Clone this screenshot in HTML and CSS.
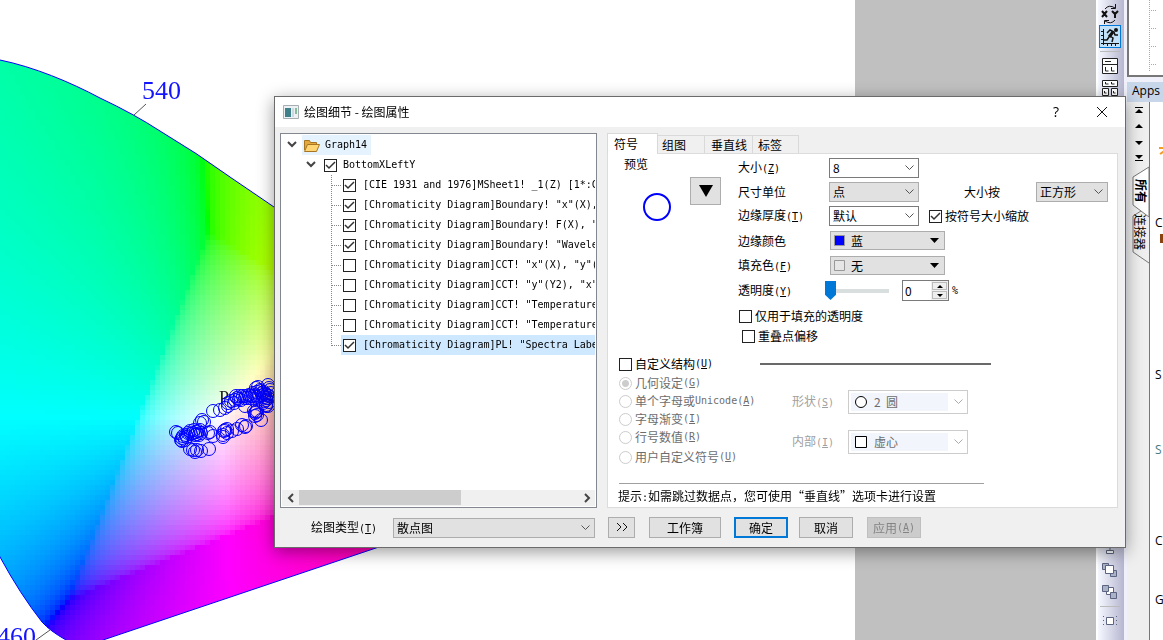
FILE: index.html
```html
<!DOCTYPE html>
<html lang="zh-CN">
<head>
    <meta charset="UTF-8">
    <meta name="viewport" content="width=device-width, initial-scale=1.0">
    <title>绘图细节 - 绘图属性</title>
    <link rel="stylesheet" href="styles.css">
</head>
<body>
    <div class="app">
        <main class="workspace">
            <div class="graph-page">
                <canvas id="diagram" class="diagram" width="855" height="640"></canvas>
                <svg class="diagram-labels" width="855" height="640">
                    <path id="locus" d="M-40 54 Q-10 57 0 60 C34 67 70 82 100 98 Q134 114 160 131 Q197 153 230 177 L274 207 L640 459 L103 640 L90 650 Q76 648 66 640 Q50 631 42 622 Q20 594 0 557 L-40 480 Z" fill="none" stroke="#00f"/>
                    <path d="M134 115 L146 104 M50 630 L36 640" stroke="#555"/>
                    <text x="142" y="99" class="wavelength">540</text>
                    <text x="-3" y="645" class="wavelength">460</text>
                </svg>
            </div>
        </main>

        <nav class="toolbar">
            <button class="tool" aria-label="XY">
                <svg width="20" height="20" viewBox="0 0 20 20" fill="none" stroke="#111">
                    <path d="M2 7l5 6M7 7l-5 6M12 7l3 3 3-3M15 10v4" stroke-width="2"/>
                    <path d="M5 5q4-5 10-1M15.500 0v4.500H11M15 16q-4 5-10 1M4.500 21v-4.500H9"/>
                </svg>
            </button>
            <button class="tool active" aria-label="Run">
                <svg width="20" height="20" viewBox="0 0 20 20" fill="none" stroke="#111">
                    <path d="M3.500 2v16M1 16.500h18M1 4.500h2M1 8.500h2M1 12.500h2M7.500 16v3M11.500 16v3M15.500 16v3"/>
                    <path d="M13 5l-4 5" stroke-width="3"/>
                    <path d="M7 6l3-3 4 2 1 3h3M10 9l3 2-1 4M9 10l-2 3H4" stroke-width="1.500"/>
                    <circle cx="16" cy="3" r="2" fill="#111" stroke="none"/>
                </svg>
            </button>
            <hr>
            <button class="tool" aria-label="Layout">
                <svg width="18" height="18" viewBox="0 0 18 18" fill="#fff" stroke="#222">
                    <path d="M1.500 1.500h15v15h-15zM1.500 7.500h15"/>
                    <path d="M4 4.500h6M4.500 10v4h3M10.500 10v4h3" fill="none"/>
                </svg>
            </button>
            <button class="tool" aria-label="Grid layout">
                <svg width="18" height="18" viewBox="0 0 18 18" fill="#fff" stroke="#222">
                    <path d="M1.500 1.500h15v6h-15zM1.500 9.500h6v7h-6zM10.500 9.500h6v7h-6z"/>
                    <path d="M4.500 3v2h3M10.500 3v2h3M3.500 12v2h2M12.500 12v2h2" fill="none"/>
                </svg>
            </button>
            <div class="spacer"></div>
            <button class="tool" aria-label="Align">
                <svg width="18" height="18" viewBox="0 0 18 18" fill="#fff" stroke="#5b6480">
                    <path d="M3.500 1.500h11v4h-11zM9 6v5M5.500 11.500h7v3h-7z"/>
                </svg>
            </button>
            <button class="tool" aria-label="Bring to front">
                <svg width="18" height="18" viewBox="0 0 18 18" fill="#a9b2c6" stroke="#5b6480">
                    <path d="M1.500 2.500h6v6h-6zM9.500 9.500h6v6h-6z"/>
                    <path d="M4.500 4.500h8v8h-8z" fill="#fff"/>
                </svg>
            </button>
            <button class="tool" aria-label="Send to back">
                <svg width="18" height="18" viewBox="0 0 18 18" fill="#a9b2c6" stroke="#5b6480">
                    <path d="M5.500 4.500h7v7h-7z" fill="#fff"/>
                    <path d="M1.500 2.500h6v6h-6zM9.500 9.500h6v6h-6z"/>
                </svg>
            </button>
            <hr>
            <button class="tool" aria-label="Group">
                <svg width="18" height="18" viewBox="0 0 18 18" fill="#fff" stroke="#5b6480">
                    <path d="M5.500 5.500h7v7h-7z"/>
                    <path d="M2.500 4v12M15.500 4v12" stroke-dasharray="1 3"/>
                </svg>
            </button>
        </nav>

        <aside class="side">
            <div class="side-tree">
                <svg width="14" height="72" fill="none" stroke="#aaa" stroke-dasharray="1 1">
                    <path d="M.5 0v72M0 10.500h8M0 28.500h8M0 46.500h8M0 64.500h8"/>
                </svg>
            </div>
            <div class="side-title">Apps</div>
            <div class="side-body">
                <svg class="side-tabs" width="22" height="170" fill="none" stroke="#777">
                    <g fill="#000" stroke="none">
                        <path d="M8 5h8v1H8zM8 11l4-4 4 4zM8 26l4-4 4 4zM8 39l4 4 4-4zM8 53l4 4 4-4zM8 58h8v1H8z"/>
                    </g>
                    <path d="M22 65L6 75v28l16 12V65" fill="#fff"/>
                    <path d="M14 109l-8 5v36l16 11"/>
                    <text class="side-tab current" transform="translate(9 77) rotate(90)">所有</text>
                    <text class="side-tab" transform="translate(8 112) rotate(90)">连接器</text>
                </svg>
                <ul class="app-list">
                    <li class="first">
                        <svg width="12" height="12" fill="none" stroke="#f59a23" stroke-width="2"><path d="M4 3h8M5 9l6-4"/></svg>
                        C
                        <svg width="12" height="9" fill="#8a4413"><path d="M5 0h3v9H5z"/></svg>
                    </li>
                    <li></li>
                    <li>S</li>
                    <li class="teal">S</li>
                    <li class="low">C</li>
                    <li>G</li>
                </ul>
            </div>
        </aside>
    </div>

    <section class="dialog" role="dialog" aria-labelledby="dialog-title">
        <header class="titlebar">
            <svg width="16" height="14" viewBox="0 0 16 14">
                <path d="M.5.5h15v13H.5z" fill="#eef1f3" stroke="#a6adb3"/>
                <path d="M2 3h6v9H2z" fill="#3d8089"/>
                <path d="M9 3h2v9H9z" fill="#ccd8e2"/>
                <path d="M12 3h2v6h-2z" fill="#86bd9b"/>
            </svg>
            <h1 id="dialog-title">绘图细节 - 绘图属性</h1>
            <button class="title-button help">?</button>
            <button class="title-button" aria-label="关闭">
                <svg width="12" height="12" stroke="#111"><path d="M1 1l10 10M11 1L1 11"/></svg>
            </button>
        </header>

        <div class="dialog-body">
            <div class="tree">
                <div class="tree-row">
                    <svg class="chevron" width="11" height="8" fill="none" stroke="#444" stroke-width="2"><path d="M1 1l4 4 4-4"/></svg>
                    <span class="tree-root">
                        <svg width="18" height="15" viewBox="0 0 18 15">
                            <path d="M1.500 12V2.500h5l1 2h6V7" fill="#e3a93c" stroke="#a87522"/>
                            <path d="M1.500 13.500l3-7h12l-3 7z" fill="#ffd673" stroke="#a87522"/>
                        </svg>
                        Graph14
                    </span>
                </div>
                <label class="tree-row layer">
                    <svg class="chevron" width="11" height="8" fill="none" stroke="#444" stroke-width="2"><path d="M1 1l4 4 4-4"/></svg>
                    <input type="checkbox" checked> BottomXLeftY
                </label>
                <div class="tree-plots">
                    <label class="tree-row plot"><input type="checkbox" checked><span>[CIE 1931 and 1976]MSheet1! _1(Z) [1*:C</span></label>
                    <label class="tree-row plot"><input type="checkbox" checked><span>[Chromaticity Diagram]Boundary! "x"(X),</span></label>
                    <label class="tree-row plot"><input type="checkbox" checked><span>[Chromaticity Diagram]Boundary! F(X), "</span></label>
                    <label class="tree-row plot"><input type="checkbox" checked><span>[Chromaticity Diagram]Boundary! "Wavele</span></label>
                    <label class="tree-row plot"><input type="checkbox"><span>[Chromaticity Diagram]CCT! "x"(X), "y"(</span></label>
                    <label class="tree-row plot"><input type="checkbox"><span>[Chromaticity Diagram]CCT! "y"(Y2), "x"</span></label>
                    <label class="tree-row plot"><input type="checkbox"><span>[Chromaticity Diagram]CCT! "Temperature</span></label>
                    <label class="tree-row plot"><input type="checkbox"><span>[Chromaticity Diagram]CCT! "Temperature</span></label>
                    <label class="tree-row plot selected"><input type="checkbox" checked><span>[Chromaticity Diagram]PL! "Spectra Labe</span></label>
                </div>
                <div class="scrollbar">
                    <button aria-label="向左"><svg width="8" height="10" fill="none" stroke="#444" stroke-width="2"><path d="M6 1L2 5l4 4"/></svg></button>
                    <div class="scroll-track"><div class="scroll-thumb"></div></div>
                    <button aria-label="向右"><svg width="8" height="10" fill="none" stroke="#444" stroke-width="2"><path d="M2 1l4 4-4 4"/></svg></button>
                </div>
            </div>

            <div class="properties">
                <div class="tabs">
                    <button class="tab current">符号</button>
                    <button class="tab">组图</button>
                    <button class="tab">垂直线</button>
                    <button class="tab">标签</button>
                </div>
                <div class="tab-panel">
                    <div class="symbol-area">
                        <div class="preview">
                            <span>预览</span>
                            <div class="preview-symbol">
                                <svg width="30" height="30"><circle cx="15" cy="15" r="13" fill="none" stroke="#00f" stroke-width="2"/></svg>
                                <button class="symbol-picker" aria-label="选择符号">
                                    <svg width="14" height="12"><path d="M0 0h14L7 12z"/></svg>
                                </button>
                            </div>
                        </div>
                        <div class="fields">
                            <div class="field">
                                <label for="size">大小<span class="en">(<u>Z</u>)</span></label>
                                <select id="size" class="editable"><option>8</option></select>
                            </div>
                            <div class="field">
                                <label for="unit">尺寸单位</label>
                                <select id="unit"><option>点</option></select>
                                <label for="scale-by" class="scale-by">大小按</label>
                                <select id="scale-by" class="short"><option>正方形</option></select>
                            </div>
                            <div class="field">
                                <label for="thickness">边缘厚度<span class="en">(<u>T</u>)</span></label>
                                <select id="thickness" class="editable"><option>默认</option></select>
                                <label class="check beside"><input type="checkbox" checked>按符号大小缩放</label>
                            </div>
                            <div class="field color">
                                <label for="edge">边缘颜色</label>
                                <select id="edge" class="color-select blue"><option>蓝</option></select>
                            </div>
                            <div class="field color">
                                <label for="fill">填充色<span class="en">(<u>F</u>)</span></label>
                                <select id="fill" class="color-select none"><option>无</option></select>
                            </div>
                            <div class="field color">
                                <label for="opacity">透明度<span class="en">(<u>Y</u>)</span></label>
                                <input id="opacity" type="range" min="0" max="100" value="0">
                                <div class="spinner">
                                    <input type="text" value="0" aria-label="透明度">
                                    <div class="spin-buttons">
                                        <button aria-label="增加"><svg width="6" height="3"><path d="M0 3l3-3 3 3z"/></svg></button>
                                        <button aria-label="减少"><svg width="6" height="3"><path d="M0 0l3 3 3-3z"/></svg></button>
                                    </div>
                                </div>
                                <span class="en">%</span>
                            </div>
                            <div class="options">
                                <label class="check"><input type="checkbox">仅用于填充的透明度</label>
                                <label class="check indent"><input type="checkbox">重叠点偏移</label>
                            </div>
                        </div>
                    </div>

                    <div class="custom-head">
                        <label class="check"><input type="checkbox">自定义结构<span class="en">(<u>U</u>)</span></label>
                        <hr>
                    </div>
                    <div class="custom">
                        <div class="radios">
                            <label class="check"><input type="radio" name="kind" checked disabled>几何设定<span class="en">(<u>G</u>)</span></label>
                            <label class="check"><input type="radio" name="kind" disabled>单个字母或<span class="en">Unicode(<u>A</u>)</span></label>
                            <label class="check"><input type="radio" name="kind" disabled>字母渐变<span class="en">(<u>I</u>)</span></label>
                            <label class="check"><input type="radio" name="kind" disabled>行号数值<span class="en">(<u>R</u>)</span></label>
                            <label class="check"><input type="radio" name="kind" disabled>用户自定义符号<span class="en">(<u>U</u>)</span></label>
                        </div>
                        <div class="shapes">
                            <label for="shape">形状<span class="en">(<u>S</u>)</span></label>
                            <select id="shape" class="shape-select circle" disabled><option>2&nbsp; 圆</option></select>
                            <label for="interior">内部<span class="en">(<u>I</u>)</span></label>
                            <select id="interior" class="shape-select square" disabled><option>虚心</option></select>
                        </div>
                    </div>
                    <p class="hint">提示<span class="en">:</span>如需跳过数据点，您可使用“垂直线”选项卡进行设置</p>
                </div>
            </div>
        </div>

        <footer class="dialog-footer">
            <label for="plot-type">绘图类型<span class="en">(<u>T</u>)</span></label>
            <select id="plot-type"><option>散点图</option></select>
            <button class="btn more" aria-label="更多">
                <svg width="12" height="9" fill="none" stroke="#111"><path d="M1 0l4 4-4 4M7 0l4 4-4 4"/></svg>
            </button>
            <button class="btn wide">工作簿</button>
            <button class="btn ok">确定</button>
            <button class="btn cancel">取消</button>
            <button class="btn apply" disabled>应用<span class="en">(<u>A</u>)</span></button>
        </footer>
    </section>

    <script src="diagram.js"></script>
</body>
</html>
```

FILE: styles.css
```css
* {
    box-sizing: border-box;
}
body {
    margin: 0;
    color: #000;
    font-family: "Noto Sans CJK SC", sans-serif;
    font-size: 12px;
    line-height: 16px;
    overflow: hidden;
}
button, input, select {
    font: inherit;
    color: inherit;
    margin: 0;
}
svg {
    display: block;
    flex-shrink: 0;
}
.en {
    font-family: "DejaVu Sans Mono", monospace;
    font-size: 10px;
}

/* main window */
.app {
    display: flex;
    height: 100vh;
}
.workspace {
    flex: 1;
    min-width: 0;
    background: #c0c0c0;
    overflow: hidden;
}
.graph-page {
    position: relative;
    width: 855px;
    height: 100%;
    background: #fff;
    overflow: hidden;
}
.diagram, .diagram-labels {
    position: absolute;
    left: 0;
    top: 0;
}
.wavelength {
    font-family: "Liberation Serif", serif;
    font-size: 26px;
    fill: #1414ff;
}
.toolbar {
    display: flex;
    flex-direction: column;
    align-items: center;
    width: 28px;
    padding: 3px 2px 8px 0;
    border-left: 2px solid #fff;
    background: linear-gradient(to right, #f6f8ff, #b6b6d0);
}
.tool {
    display: flex;
    align-items: center;
    justify-content: center;
    width: 22px;
    height: 22px;
    padding: 0;
    border: 0;
    background: none;
}
.tool.active {
    height: 23px;
    border: 1px solid #0078d7;
    background: #c2e0f7;
}
.toolbar hr {
    width: 20px;
    margin: 3px 0;
    border: 0;
    border-top: 1px solid #bbb;
}
.spacer {
    flex: 1;
}
.side {
    display: flex;
    flex-direction: column;
    width: 39px;
    padding-left: 3px;
    background: #f0f0fa;
    overflow: hidden;
}
.side-tree {
    height: 77px;
    padding-left: 20px;
    border-left: 2px solid #777;
    border-bottom: 2px solid #777;
    background: #fff;
}
.side-title {
    height: 20px;
    margin-top: 5px;
    padding-left: 5px;
    background: #c8d6ea;
    font-family: "Open Sans", sans-serif;
    line-height: 18px;
}
.side-body {
    display: flex;
    flex: 1;
    background: #efefef;
}
.side-tab {
    font-size: 12px;
    fill: #000;
    stroke: none;
}
.side-tab.current {
    font-weight: bold;
}
.app-list {
    flex: 1;
    margin: 0;
    padding: 43px 0 0 5px;
    border-left: 1px solid #777;
    background: #fff;
    font-family: "Open Sans", sans-serif;
    list-style: none;
}
.app-list li {
    height: 75px;
    line-height: 75px;
}
.app-list .first {
    display: flex;
    flex-direction: column;
    justify-content: space-between;
    height: 98px;
    margin-bottom: 19px;
    line-height: 16px;
}
.app-list .first svg:first-child {
    margin-bottom: 54px;
}
.app-list .teal {
    color: #4a7a80;
}
.app-list .low {
    line-height: 108px;
}

/* dialog */
.dialog {
    position: absolute;
    left: 274px;
    right: 37px;
    top: 96px;
    border: 1px solid #6b6b6b;
    background: #f0f0f0;
    box-shadow: 0 4px 16px rgba(0, 0, 0, 0.4);
}
.titlebar {
    display: flex;
    align-items: center;
    height: 30px;
    padding-left: 8px;
    background: #fff;
}
.titlebar h1 {
    flex: 1;
    margin: 0 0 0 5px;
    font-size: 12px;
    font-weight: normal;
}
.title-button {
    display: flex;
    align-items: center;
    justify-content: center;
    width: 46px;
    height: 30px;
    padding: 0;
    border: 0;
    background: none;
}
.title-button.help {
    font-family: "Open Sans", sans-serif;
    font-size: 14px;
}
.dialog-body {
    display: grid;
    grid-template-columns: 317px 1fr;
    gap: 10px;
    padding: 6px 7px 0 5px;
}

/* controls */
input[type="checkbox"] {
    appearance: none;
    flex-shrink: 0;
    width: 13px;
    height: 13px;
    border: 1px solid #222;
    background: #fff;
}
input[type="checkbox"]:checked {
    background: #fff url("data:image/svg+xml,%3Csvg xmlns='http://www.w3.org/2000/svg' width='11' height='11'%3E%3Cpath d='M1 5l3 3 6-6' fill='none' stroke='%23333' stroke-width='1.500'/%3E%3C/svg%3E");
}
input[type="radio"] {
    appearance: none;
    flex-shrink: 0;
    width: 13px;
    height: 13px;
    border: 1px solid #ccc;
    border-radius: 50%;
    background: #fff;
}
input[type="radio"]:checked {
    background: radial-gradient(circle, #ccc 3px, #fff 4px);
}
select {
    appearance: none;
    width: 90px;
    height: 20px;
    padding: 0 16px 0 3px;
    border: 1px solid #adadad;
    border-radius: 0;
    background: #e1e1e1 url("data:image/svg+xml,%3Csvg xmlns='http://www.w3.org/2000/svg' width='9' height='6'%3E%3Cpath d='M0.500 0.500l4 4 4-4' fill='none' stroke='%23555'/%3E%3C/svg%3E") no-repeat right 4px center;
    line-height: 16px;
}
select.editable {
    border-color: #7a7a7a;
    background-color: #fff;
}
select.short {
    width: 72px;
}
select.color-select {
    width: 115px;
    height: 19px;
    margin-left: 1px;
    padding-left: 20px;
    background-position: left 3px center, right 5px center;
}
.color-select.blue {
    background-image: url("data:image/svg+xml,%3Csvg xmlns='http://www.w3.org/2000/svg' width='11' height='11'%3E%3Cpath d='M.5.5h10v10H.5z' fill='%2300f' stroke='%23999'/%3E%3C/svg%3E"), url("data:image/svg+xml,%3Csvg xmlns='http://www.w3.org/2000/svg' width='9' height='5'%3E%3Cpath d='M0 0h9L4.500 5z'/%3E%3C/svg%3E");
}
.color-select.none {
    background-image: url("data:image/svg+xml,%3Csvg xmlns='http://www.w3.org/2000/svg' width='11' height='11'%3E%3Cpath d='M.5.5h10v10H.5z' fill='%23e6e6e6' stroke='%23999'/%3E%3C/svg%3E"), url("data:image/svg+xml,%3Csvg xmlns='http://www.w3.org/2000/svg' width='9' height='5'%3E%3Cpath d='M0 0h9L4.500 5z'/%3E%3C/svg%3E");
}
.check {
    display: flex;
    align-items: center;
    gap: 3px;
    white-space: nowrap;
}
.check .en {
    margin-left: -3px;
}

/* tree */
.tree {
    display: flex;
    flex-direction: column;
    height: 375px;
    padding: 1px;
    border: 1px solid #828790;
    background: #fff;
    overflow: hidden;
    font-family: "DejaVu Sans Mono", monospace;
    font-size: 10px;
}
.tree-row {
    display: flex;
    align-items: center;
    height: 20px;
    padding-left: 5px;
    white-space: nowrap;
}
.tree-root {
    display: flex;
    align-items: center;
    gap: 4px;
    height: 20px;
    margin-left: 4px;
    padding: 0 4px 0 1px;
    background: #e5f3ff;
}
.tree-row.layer {
    padding-left: 24px;
}
.layer input {
    margin: 0 6px 0 7px;
}
.tree-plots {
    margin-left: 49px;
    background: repeating-linear-gradient(to bottom, #888 0 1px, transparent 1px 2px) no-repeat 0 0 / 1px 170px;
}
.tree-row.plot {
    padding-left: 0;
}
.plot::before {
    content: "";
    flex-shrink: 0;
    width: 10px;
    border-top: 1px dotted #888;
}
.plot input {
    margin: 0 0 0 2px;
}
.plot span {
    flex: 1;
    padding-left: 7px;
    line-height: 20px;
    overflow: hidden;
}
.plot.selected {
    background: linear-gradient(#cde8ff, #cde8ff) no-repeat 10px 0;
}
.scrollbar {
    display: flex;
    height: 16px;
    margin-top: auto;
    background: #f0f0f0;
}
.scrollbar button {
    display: flex;
    align-items: center;
    justify-content: center;
    width: 17px;
    padding: 0;
    border: 0;
    background: none;
}
.scroll-track {
    flex: 1;
}
.scroll-thumb {
    width: 58%;
    height: 15px;
    background: #cdcdcd;
}

/* property tabs */
.properties {
    display: flex;
    flex-direction: column;
}
.tabs {
    display: flex;
    align-items: flex-end;
    height: 20px;
}
.tab {
    height: 18px;
    padding: 0 17px 0 4px;
    border: 1px solid #d9d9d9;
    border-left: 0;
    border-bottom: 0;
    background: #f0f0f0;
    line-height: 17px;
}
.tab:nth-child(2) {
    padding-right: 18px;
}
.tab:nth-child(3) {
    padding: 0 5px 0 6px;
}
.tab:nth-child(4) {
    padding-left: 5px;
    padding-right: 16px;
}
.tab.current {
    position: relative;
    height: 21px;
    margin-bottom: -1px;
    padding: 0 19px 2px 6px;
    border-left: 1px solid #d9d9d9;
    background: #fff;
}
.tab-panel {
    flex: 1;
    padding: 2px 9px 0 0;
    border: 1px solid #dcdcdc;
    background: #fff;
}
.symbol-area {
    display: grid;
    grid-template-columns: 130px 1fr;
}
.preview > span {
    display: block;
    padding-left: 16px;
}
.preview-symbol {
    display: flex;
    align-items: flex-start;
    justify-content: space-between;
    margin-top: 5px;
    padding: 0 17px 0 34px;
}
.preview-symbol > svg {
    margin-top: 15px;
}
.symbol-picker {
    display: flex;
    align-items: center;
    justify-content: center;
    width: 31px;
    height: 28px;
    padding: 0;
    border: 1px solid #adadad;
    background: #e1e1e1;
}
.field {
    display: flex;
    align-items: center;
    height: 24px;
}
.field.color {
    height: 25px;
}
.field > label:first-child {
    width: 91px;
}
.scale-by {
    margin: 0 auto 0 45px;
}
.beside {
    margin-left: 10px;
}
input[type="range"] {
    appearance: none;
    width: 64px;
    height: 20px;
    margin: 0 13px 0 -4px;
    background: linear-gradient(#d9dfdf, #d9dfdf) no-repeat center / 100% 4px;
}
input[type="range"]::-webkit-slider-thumb {
    appearance: none;
    width: 11px;
    height: 19px;
    background: #0078d7;
    clip-path: polygon(0 0, 100% 0, 100% 72%, 50% 100%, 0 72%);
}
.spinner {
    display: flex;
    width: 47px;
    height: 21px;
    margin-right: 3px;
    border: 1px solid #7a7a7a;
    background: #fff;
}
.spinner input {
    flex: 1;
    min-width: 0;
    padding: 0 2px;
    border: 0;
    background: none;
}
.spin-buttons {
    display: grid;
    width: 17px;
    padding: 1px;
    gap: 1px;
    background: #f0f0f0;
}
.spin-buttons button {
    display: flex;
    align-items: center;
    justify-content: center;
    padding: 0;
    border: 1px solid #bbb;
    background: #eee;
}
.options {
    padding: 3px 0 0 1px;
}
.options .check {
    height: 20px;
}
.indent {
    margin-left: 3px;
}
.custom-head {
    display: flex;
    align-items: center;
    height: 20px;
    margin-top: 8px;
    padding-left: 11px;
}
.custom-head .check {
    width: 141px;
}
.custom-head hr {
    width: 231px;
    margin: 0;
    border: 0;
    border-top: 2px solid #696969;
}
.custom {
    display: flex;
    width: 365px;
    height: 110px;
    margin-left: 11px;
    border-bottom: 1px solid #a0a0a0;
    color: #6d6d6d;
}
.radios {
    width: 173px;
}
.radios .check {
    height: 18px;
}
.radios .check:last-child {
    height: 22px;
}
.shapes {
    display: grid;
    grid-template-columns: 56px 120px;
    grid-auto-rows: 24px;
    align-content: start;
    gap: 16px 0;
    align-items: center;
    padding-top: 16px;
    color: #a0a0a0;
}
select.shape-select {
    width: 120px;
    height: 24px;
    padding-left: 25px;
    border-color: #ccc;
    background-color: #fff;
    background-position: left 6px center, right 4px center, 2px 2px;
    background-size: 12px 12px, 9px 6px, 97px 18px;
    color: #6d6d6d;
    opacity: 1;
}
.shape-select.circle {
    background-image: url("data:image/svg+xml,%3Csvg xmlns='http://www.w3.org/2000/svg' width='12' height='12'%3E%3Ccircle cx='6' cy='6' r='5.500' fill='%23fff' stroke='%23000'/%3E%3C/svg%3E"), url("data:image/svg+xml,%3Csvg xmlns='http://www.w3.org/2000/svg' width='9' height='6'%3E%3Cpath d='M0.500 0.500l4 4 4-4' fill='none' stroke='%23aaa'/%3E%3C/svg%3E"), linear-gradient(#f2f6fc, #f2f6fc);
}
.shape-select.square {
    background-image: url("data:image/svg+xml,%3Csvg xmlns='http://www.w3.org/2000/svg' width='12' height='12'%3E%3Cpath d='M.5.5h11v11H.5z' fill='%23fff' stroke='%23000'/%3E%3C/svg%3E"), url("data:image/svg+xml,%3Csvg xmlns='http://www.w3.org/2000/svg' width='9' height='6'%3E%3Cpath d='M0.500 0.500l4 4 4-4' fill='none' stroke='%23aaa'/%3E%3C/svg%3E"), linear-gradient(#f2f6fc, #f2f6fc);
}
.hint {
    margin: 4px 0 0 10px;
}

/* footer */
.dialog-footer {
    display: flex;
    align-items: center;
    height: 39px;
    padding-left: 36px;
}
.dialog-footer label {
    width: 82px;
}
.dialog-footer select {
    width: 202px;
    margin-right: 13px;
}
.btn {
    display: flex;
    align-items: center;
    justify-content: center;
    width: 54px;
    height: 21px;
    padding: 0;
    border: 1px solid #adadad;
    background: #e1e1e1;
}
.btn.more {
    width: 27px;
    margin-right: 14px;
}
.btn.wide {
    width: 72px;
    margin-right: 13px;
}
.btn.ok {
    margin-right: 11px;
    border: 2px solid #0078d7;
}
.btn.cancel {
    margin-right: 14px;
}
.btn.apply {
    border-color: #bfbfbf;
    background: #ccc;
    color: #838383;
}
```

FILE: diagram.js
```js
const canvas = document.getElementById("diagram");
const ctx = canvas.getContext("2d");
const locus = new Path2D(document.getElementById("locus").getAttribute("d"));
const CELL = 5;

function gamma(v) {
    return v <= 0.0031308 ? 12.92 * v : 1.055 * Math.pow(v, 1 / 2.4) - 0.055;
}

// CIE xy -> brightest sRGB colour, out of gamut colours are pulled towards white
function xyToColor(x, y) {
    const X = x / y;
    const Z = (1 - x - y) / y;
    let rgb = [
        3.2406 * X - 1.5372 - 0.4986 * Z,
        -0.9689 * X + 1.8758 + 0.0415 * Z,
        0.0557 * X - 0.204 + 1.057 * Z
    ];
    const min = Math.min(0, ...rgb);
    rgb = rgb.map(v => v - min);
    const max = Math.max(...rgb);
    return "rgb(" + rgb.map(v => Math.round(255 * gamma(v / max))).join(",") + ")";
}

function drawColors() {
    ctx.save();
    ctx.clip(locus);
    for (let px = 0; px < 640; px += CELL) {
        for (let py = 0; py < 640; py += CELL) {
            const x = 0.15 + (px - 66) / 933;
            const y = Math.max(0.005, 0.06 + (597 - py) / 680);
            ctx.fillStyle = xyToColor(x, y);
            ctx.fillRect(px, py, CELL, CELL);
        }
    }
    ctx.restore();
}

const points = [
    [176, 432], [178, 433], [182, 438], [183, 436], [181, 440], [182, 441], [185, 440], [186, 435],
    [188, 433], [191, 434], [187, 437], [190, 431], [193, 433], [195, 435], [196, 432], [198, 431],
    [199, 435], [200, 430], [201, 433], [197, 434], [194, 430], [208, 433], [210, 432], [213, 436],
    [202, 420], [204, 422], [200, 423], [190, 449], [193, 450], [195, 452], [197, 450], [201, 451],
    [209, 449], [213, 411], [220, 410], [225, 408], [228, 406], [223, 437], [224, 431], [225, 430],
    [227, 429], [227, 433], [223, 435], [232, 431], [237, 429], [242, 425], [245, 427], [246, 426],
    [228, 403], [231, 401], [235, 400], [234, 403], [237, 398], [239, 399], [241, 400], [243, 396],
    [245, 398], [246, 396], [247, 398], [249, 395], [251, 396], [250, 398], [236, 396], [240, 396],
    [253, 393], [255, 395], [257, 392], [260, 390], [258, 387], [256, 388], [261, 391], [263, 395],
    [254, 396], [259, 396], [262, 393], [265, 394], [267, 395], [269, 396], [264, 392], [257, 397],
    [264, 397], [266, 398], [265, 401], [266, 400], [268, 398], [268, 385], [269, 388], [270, 390],
    [271, 393], [263, 403], [266, 406], [268, 406], [266, 405], [269, 402], [255, 413], [256, 412],
    [257, 415], [254, 411], [255, 416], [257, 411], [261, 420], [245, 406]
];

function drawPoints() {
    ctx.strokeStyle = "#0000ff";
    points.forEach(([x, y]) => {
        ctx.beginPath();
        ctx.arc(x, y, 6.5, 0, Math.PI * 2);
        ctx.stroke();
    });
}

drawColors();
ctx.font = "18px 'Liberation Serif', serif";
ctx.fillStyle = "#222";
ctx.fillText("P", 219, 404);
drawPoints();
```
